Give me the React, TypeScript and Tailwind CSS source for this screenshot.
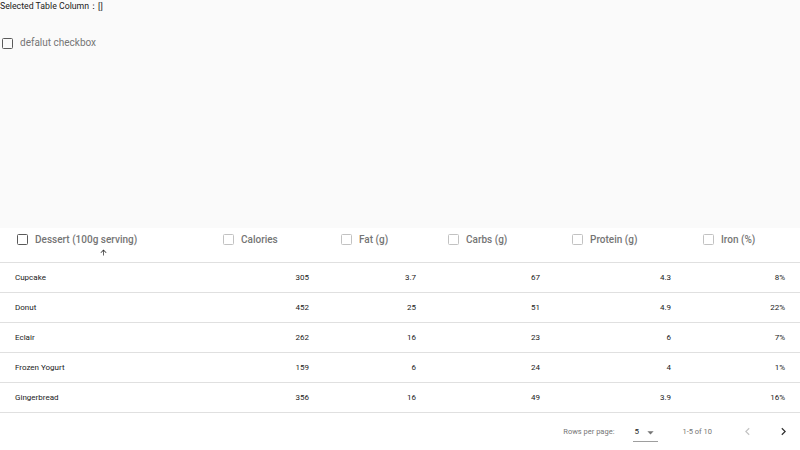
import React from "react";

type Row = { name: string; cal: string; fat: string; carbs: string; protein: string; iron: string };

const rows: Row[] = [
  { name: "Cupcake", cal: "305", fat: "3.7", carbs: "67", protein: "4.3", iron: "8%" },
  { name: "Donut", cal: "452", fat: "25", carbs: "51", protein: "4.9", iron: "22%" },
  { name: "Eclair", cal: "262", fat: "16", carbs: "23", protein: "6", iron: "7%" },
  { name: "Frozen Yogurt", cal: "159", fat: "6", carbs: "24", protein: "4", iron: "1%" },
  { name: "Gingerbread", cal: "356", fat: "16", carbs: "49", protein: "3.9", iron: "16%" },
];

function Box({ dark }: { dark?: boolean }) {
  return (
    <span
      className={
        "block w-[11px] h-[11px] shrink-0 rounded-[1.5px] border-[1.5px] " +
        (dark ? "border-[#5a5a5a]" : "border-[#c2c2c2]")
      }
    />
  );
}

function HeadCell({ label, dark, first }: { label: string; dark?: boolean; first?: boolean }) {
  return (
    <div className={"flex flex-col pt-[5.5px] " + (first ? "pl-[17px]" : "pl-[16px]")}>
      <div className="flex items-center h-[12px]">
        <Box dark={dark} />
        <span className="ml-[7px] text-[10px] leading-[12px] font-medium text-[#757575] whitespace-nowrap">
          {label}
        </span>
      </div>
      {first && (
        <svg className="ml-[82px] mt-[2px] w-[9px] h-[9px] text-[#333]" viewBox="0 0 24 24" fill="currentColor">
          <path d="M4 12l1.41 1.41L11 7.83V20h2V7.83l5.58 5.59L20 12l-8-8-8 8z" />
        </svg>
      )}
    </div>
  );
}

export default function App() {
  const cellR = "flex items-center justify-end pr-[16px]";
  return (
    <div className="w-[800px] h-[450px] bg-[#fafafa] flex flex-col overflow-hidden font-['Roboto',sans-serif]">
      <div className="h-[228px] flex flex-col shrink-0">
        <div className="h-[12px] text-[8.75px] leading-[12px] text-[#212121] whitespace-nowrap">
          Selected Table Column：[]
        </div>
        <div className="mt-[25.5px] h-[11px] flex items-center pl-[2px]">
          <Box dark />
          <span className="ml-[7px] text-[10px] leading-[12px] text-[#757575]">defalut checkbox</span>
        </div>
      </div>
      <div className="bg-white flex-1 flex flex-col">
        <div className="grid grid-cols-[207px_118px_107px_124px_131px_113px] h-[35px] border-b border-[#e0e0e0]">
          <HeadCell label="Dessert (100g serving)" dark first />
          <HeadCell label="Calories" />
          <HeadCell label="Fat (g)" />
          <HeadCell label="Carbs (g)" />
          <HeadCell label="Protein (g)" />
          <HeadCell label="Iron (%)" />
        </div>
        {rows.map((r) => (
          <div
            key={r.name}
            className="grid grid-cols-[207px_118px_107px_124px_131px_113px] h-[30px] border-b border-[#e0e0e0] text-[8px] text-[#212121]"
          >
            <div className="flex items-center pl-[15px]">{r.name}</div>
            <div className={cellR}>{r.cal}</div>
            <div className={cellR}>{r.fat}</div>
            <div className={cellR}>{r.carbs}</div>
            <div className={cellR}>{r.protein}</div>
            <div className="flex items-center justify-end pr-[15px]">{r.iron}</div>
          </div>
        ))}
        <div className="flex-1 flex items-center justify-end text-[7.5px] text-[#757575] pr-[4px]">
          <span className="whitespace-nowrap">Rows per page:</span>
          <div className="ml-[19px] w-[25px] h-[18px] mt-[2px] flex items-center border-b border-[#9e9e9e] text-[#212121]">
            <span className="ml-[1px] text-[8px]">5</span>
            <svg className="ml-auto w-[15px] h-[15px] text-[#757575]" viewBox="0 0 24 24" fill="currentColor">
              <path d="M7 10l5 5 5-5z" />
            </svg>
          </div>
          <span className="ml-[24px] whitespace-nowrap">1-5 of 10</span>
          <div className="ml-[23px] w-[25px] h-[25px] flex items-center justify-center">
            <svg className="w-[15px] h-[15px] text-[#c4c4c4]" viewBox="0 0 24 24" fill="currentColor">
              <path d="M15.41 7.41L14 6l-6 6 6 6 1.41-1.41L10.83 12z" />
            </svg>
          </div>
          <div className="ml-[11px] w-[25px] h-[25px] flex items-center justify-center">
            <svg className="w-[15px] h-[15px] text-[#333]" viewBox="0 0 24 24" fill="currentColor">
              <path d="M10 6L8.59 7.41 13.17 12l-4.58 4.59L10 18l6-6z" />
            </svg>
          </div>
        </div>
      </div>
    </div>
  );
}
